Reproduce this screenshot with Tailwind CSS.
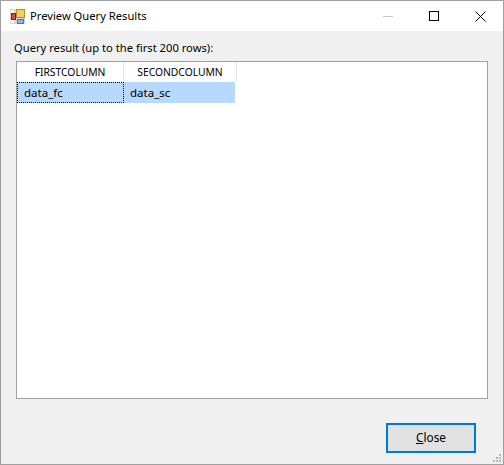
<!DOCTYPE html>
<html>
<head>
<meta charset="utf-8">
<script src="https://cdn.jsdelivr.net/npm/@tailwindcss/browser@4"></script>
</head>
<body class="m-0 overflow-hidden bg-[#f0f0f0]">
<div class="relative flex h-[465px] w-[504px] flex-col border border-[#a0a0a0] bg-[#f0f0f0] text-[11.2px] text-black [font-family:'Noto_Sans',sans-serif]">
  <div class="flex h-[30px] shrink-0 items-center bg-white pl-[9px]">
    <svg class="h-[15px] w-[15px] shrink-0" viewBox="0 0 15 15" shape-rendering="crispEdges">
      <rect x="0" y="0" width="15" height="15" fill="#d8d8d8"/>
      <rect x="1" y="1" width="3" height="3" fill="#fff"/>
      <rect x="1" y="11" width="3" height="3" fill="#fff"/>
      <rect x="6" y="0" width="9" height="9" fill="#b98a2c"/>
      <rect x="7" y="1" width="7" height="7" fill="#f7cf55"/>
      <rect x="1" y="4" width="5" height="7" fill="#8c1c1c"/>
      <rect x="2" y="5" width="3" height="5" fill="#e04a3a"/>
      <rect x="7" y="10" width="7" height="5" fill="#3f78c8"/>
      <rect x="8" y="11" width="5" height="3" fill="#8ab4ec"/>
    </svg>
    <span class="ml-[5px] pt-px">Preview Query Results</span>
    <div class="ml-auto flex h-[30px] items-center">
      <div class="flex w-[46px] justify-center"><div class="h-px w-[10px] bg-[#c8c8c8]"></div></div>
      <div class="flex w-[46px] justify-center"><div class="h-[10px] w-[10px] border border-black"></div></div>
      <div class="flex w-[46px] justify-center">
        <svg class="h-[11px] w-[11px]" viewBox="0 0 11 11"><path d="M0.5 0.5L10.5 10.5M10.5 0.5L0.5 10.5" stroke="#000" stroke-width="1" fill="none"/></svg>
      </div>
    </div>
  </div>
  <div class="flex min-h-0 flex-1 flex-col pl-[13px] pr-[15px]">
    <div class="mt-[8px] h-[22px] leading-[18px]">Query result (up to the first 200 rows):</div>
    <div class="ml-[2px] h-[338px] border border-[#a0a0a0] bg-white">
      <div class="flex h-[20px]">
        <div class="flex w-[107px] items-center justify-center border-r border-[#e4e4e4] pt-px text-[10.3px]">FIRSTCOLUMN</div>
        <div class="flex w-[113px] items-center justify-center border-r border-[#e4e4e4] pt-px text-[10.3px]">SECONDCOLUMN</div>
      </div>
      <div class="flex h-[21px] w-[218px] bg-[#b5d9ff] text-[11.5px]">
        <div class="flex h-[21px] w-[107px] items-center border border-dotted border-black pl-[6px]">data_fc</div>
        <div class="flex items-center pl-[6px]">data_sc</div>
      </div>
    </div>
    <div class="mt-[24px] ml-[372px] flex h-[30px] w-[90px] items-center justify-center border-2 border-[#0078d7] bg-[#e1e1e1] text-[11.8px]"><span><span class="underline">C</span>lose</span></div>
  </div>
  <svg class="absolute bottom-[2px] right-[2px] h-[8px] w-[8px]" viewBox="0 0 8 8" shape-rendering="crispEdges" fill="#b8b8b8">
    <rect x="6" y="0" width="2" height="2"/><rect x="3" y="3" width="2" height="2"/><rect x="6" y="3" width="2" height="2"/><rect x="0" y="6" width="2" height="2"/><rect x="3" y="6" width="2" height="2"/><rect x="6" y="6" width="2" height="2"/>
  </svg>
</div>
</body>
</html>
